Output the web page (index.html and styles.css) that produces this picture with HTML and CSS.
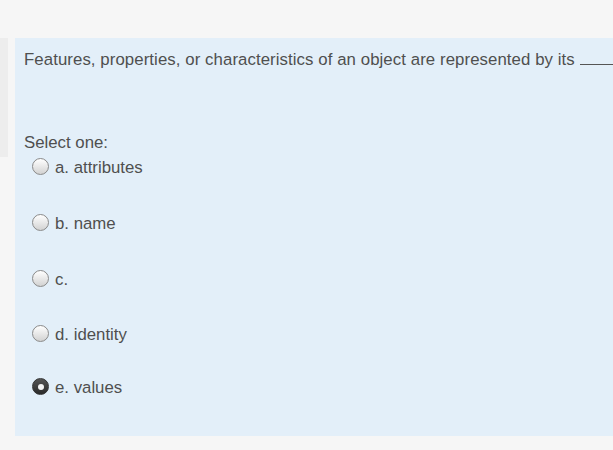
FILE: index.html
```html
<!DOCTYPE html>
<html>
<head>
<meta charset="utf-8">
<link rel="stylesheet" href="styles.css">
</head>
<body>
<div class="page">
  <div class="info"></div>
  <div class="formulation">
    <div class="qtext">Features, properties, or characteristics of an object are represented by its <span class="blank"></span></div>
    <div class="prompt">Select one:</div>
    <div class="answers">
      <div class="opt"><span class="radio"></span><span class="label">a. attributes</span></div>
      <div class="opt"><span class="radio"></span><span class="label">b. name</span></div>
      <div class="opt"><span class="radio"></span><span class="label">c.</span></div>
      <div class="opt"><span class="radio"></span><span class="label">d. identity</span></div>
      <div class="opt"><span class="radio checked"></span><span class="label">e. values</span></div>
    </div>
  </div>
</div>
</body>
</html>
```
FILE: styles.css
```css
html, body {
  margin: 0;
  padding: 0;
  background: #f6f6f6;
  width: 613px;
  height: 450px;
  overflow: hidden;
}
body {
  font-family: "Liberation Sans", Arial, sans-serif;
  color: #4f4f4f;
}
.page {
  display: flex;
  padding-top: 38px;
  gap: 7px;
}
.info {
  width: 8px;
  height: 119px;
  background: #ededed;
  flex: none;
}
.formulation {
  flex: 1;
  background: #e3eff9;
  height: 398px;
  padding: 12px 0 0 9px;
  box-sizing: border-box;
  white-space: nowrap;
  overflow: hidden;
}
.qtext {
  font-size: 16.8px;
  line-height: 20px;
  letter-spacing: 0.08px;
}
.blank {
  display: inline-block;
  width: 60px;
  border-bottom: 1px solid #555;
  vertical-align: baseline;
}
.prompt {
  font-size: 16.8px;
  line-height: 20px;
  margin-top: 63px;
}
.answers {
  display: flex;
  flex-direction: column;
  gap: 37px;
  margin-top: 4px;
}
.opt {
  display: flex;
  align-items: center;
  height: 19px;
  font-size: 16.8px;
}
.opt:nth-child(4) { margin-top: -1px; }
.opt:nth-child(5) { margin-top: -3px; }
.radio {
  width: 17px;
  height: 17px;
  border-radius: 50%;
  box-sizing: border-box;
  border: 1px solid #8a8a8a;
  background: linear-gradient(#ffffff, #d2d2d2);
  margin-left: 8px;
  margin-right: 6px;
  flex: none;
  position: relative;
}
.radio.checked {
  border-color: #333;
  background: linear-gradient(#555, #2a2a2a);
}
.radio.checked::after {
  content: "";
  position: absolute;
  left: 4.5px;
  top: 4.5px;
  width: 6px;
  height: 6px;
  border-radius: 50%;
  background: #f4f4f4;
}
.label {
  line-height: 19px;
  padding-top: 2px;
}
```
